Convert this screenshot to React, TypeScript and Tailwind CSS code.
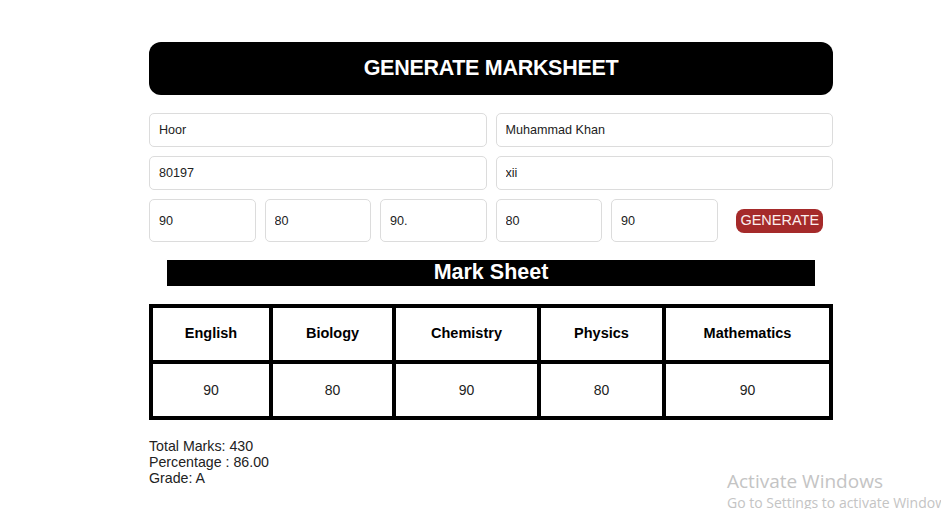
import React from "react";

const subjects = [
  { name: "English", marks: 90 },
  { name: "Biology", marks: 80 },
  { name: "Chemistry", marks: 90 },
  { name: "Physics", marks: 80 },
  { name: "Mathematics", marks: 90 },
];

// ─── Field ────────────────────────────────────────────────────────────────
function Field({ value, tall }: { value: string; tall?: boolean }) {
  return (
    <input
      defaultValue={value}
      className={
        "w-full border border-[#dcdcdc] rounded-[5px] bg-white px-[9px] text-[12.6px] text-[#222] outline-none " +
        (tall ? "h-[43px]" : "h-[34px]")
      }
    />
  );
}

export default function App() {
  const total = subjects.reduce((s, x) => s + x.marks, 0);
  const pct = ((total / 500) * 100).toFixed(2);

  return (
    <div className="relative min-h-[509px] bg-white font-['Liberation_Sans',Arial,sans-serif] overflow-hidden">
      <div className="w-[684px] ml-[149px] pt-[42px]">
        <div className="h-[53px] rounded-[12px] bg-black flex items-center justify-center">
          <h1 className="text-white font-bold text-[21.5px] tracking-[-0.3px]">GENERATE MARKSHEET</h1>
        </div>

        <div className="mt-[18px] grid grid-cols-2 gap-[9px]">
          <Field value="Hoor" />
          <Field value="Muhammad Khan" />
          <Field value="80197" />
          <Field value="xii" />
        </div>

        <div className="mt-[9px] grid grid-cols-6 gap-[9px]">
          <Field value="90" tall />
          <Field value="80" tall />
          <Field value="90." tall />
          <Field value="80" tall />
          <Field value="90" tall />
          <div className="flex items-center justify-center">
            <button
              type="button"
              className="w-[87px] h-[24px] rounded-[8px] bg-[#a52a2a] text-[#fbeeee] text-[14.5px] leading-none"
            >
              GENERATE
            </button>
          </div>
        </div>

        <div className="mx-[18px] mt-[18px] h-[26px] bg-black flex items-center justify-center">
          <h2 className="text-white font-bold text-[21.5px] leading-none">Mark Sheet</h2>
        </div>

        <div className="mt-[18px] w-[684px] border-4 border-black bg-black grid grid-cols-[116px_119px_141px_121px_163px] grid-rows-[52px_52px] gap-[4px]">
          {subjects.map((s) => (
            <div key={s.name} className="bg-white flex items-center justify-center font-bold text-[14.5px] text-black">
              {s.name}
            </div>
          ))}
          {subjects.map((s) => (
            <div key={s.name + "m"} className="bg-white flex items-center justify-center text-[14px] text-[#222]">
              {s.marks}
            </div>
          ))}
        </div>

        <div className="mt-[18px] text-[14.2px] leading-[16px] text-[#222]">
          <p>Total Marks: {total}</p>
          <p>Percentage : {pct}</p>
          <p>Grade: A</p>
        </div>
      </div>

      <div className="absolute left-[727px] top-[469px] whitespace-nowrap font-['Open_Sans',sans-serif] text-[#c4c4c4]">
        <p className="text-[19px] leading-[24px]">Activate Windows</p>
        <p className="text-[14px] leading-[18px] mt-[1px]">Go to Settings to activate Windows.</p>
      </div>
    </div>
  );
}
